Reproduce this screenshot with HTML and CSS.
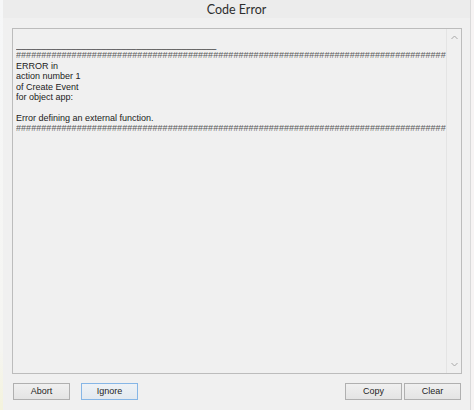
FILE: index.html
```html
<!DOCTYPE html>
<html>
<head>
<meta charset="utf-8">
<title>Code Error</title>
<link rel="stylesheet" href="styles.css">
</head>
<body>
<div class="window">
  <div class="frame-left"></div>
  <div class="main">
    <div class="titlebar">Code Error</div>
    <div class="content">
      <div class="box">
        <div class="text">
          <div class="line">________________________________________</div>
          <div class="line hash">#####################################################################################</div>
          <div class="line">ERROR in</div>
          <div class="line">action number 1</div>
          <div class="line">of Create Event</div>
          <div class="line">for object app:</div>
          <div class="line">&nbsp;</div>
          <div class="line">Error defining an external function.</div>
          <div class="line hash">#####################################################################################</div>
        </div>
        <div class="scrollbar">
          <div class="sb-btn">
            <svg width="7" height="5" viewBox="0 0 7 5"><path d="M0.5 4 L3.5 1 L6.5 4" fill="none" stroke="#a8a8a8" stroke-width="1"/></svg>
          </div>
          <div class="sb-track"></div>
          <div class="sb-btn">
            <svg width="7" height="5" viewBox="0 0 7 5"><path d="M0.5 1 L3.5 4 L6.5 1" fill="none" stroke="#a8a8a8" stroke-width="1"/></svg>
          </div>
        </div>
      </div>
      <div class="buttons">
        <button class="btn">Abort</button>
        <button class="btn default">Ignore</button>
        <div class="spacer"></div>
        <button class="btn">Copy</button>
        <button class="btn">Clear</button>
      </div>
    </div>
  </div>
  <div class="frame-right"></div>
</div>
</body>
</html>
```
FILE: styles.css
```css
html, body {
  margin: 0;
  padding: 0;
}
body {
  width: 474px;
  height: 410px;
  overflow: hidden;
  background: #f0f0f0;
  font-family: "Liberation Sans", Arial, sans-serif;
}
.window {
  display: flex;
  width: 474px;
  height: 410px;
}
.frame-left {
  width: 3px;
  flex: none;
  background: linear-gradient(#f6f7f8, #f5f5f2 85%, #f4f3dc);
}
.frame-right {
  width: 3px;
  flex: none;
  background: #f7f4f4;
}
.main {
  flex: 1;
  min-width: 0;
  display: flex;
  flex-direction: column;
  border-right: 1px solid #dadada;
  background: #f0f0f0;
}
.titlebar {
  height: 18px;
  line-height: 20px;
  text-align: center;
  font-family: Lato, "Liberation Sans", sans-serif;
  font-size: 12.5px;
  color: #2e2e2e;
  background: #ececec;
}
.content {
  flex: 1;
  min-width: 0;
  display: flex;
  flex-direction: column;
  padding: 10px 8px 0 9px;
}
.box {
  height: 344px;
  min-width: 0;
  display: flex;
  border: 1px solid #bcbcbc;
  background: #f0f0f0;
}
.text {
  flex: 1;
  min-width: 0;
  overflow: hidden;
  padding: 11px 0 0 3px;
  font-size: 9px;
  line-height: 10.4px;
  color: #222;
}
.line {
  white-space: pre;
  overflow: hidden;
}
.hash {
  color: #5a5a5a;
  letter-spacing: 0.05px;
}
.scrollbar {
  width: 14px;
  flex: none;
  border-left: 1px solid #e4e4e4;
  display: flex;
  flex-direction: column;
}
.sb-btn {
  height: 17px;
  display: flex;
  align-items: center;
  justify-content: center;
}
.sb-track {
  flex: 1;
}
.buttons {
  display: flex;
  margin-top: 9px;
  padding: 0 1px;
}
.spacer {
  flex: 1;
}
.btn {
  height: 17px;
  width: 57px;
  flex: none;
  margin: 0;
  padding: 0;
  border: 1px solid #b0b0b0;
  background: linear-gradient(#f0f0f0, #e4e4e4);
  font-family: "Liberation Sans", Arial, sans-serif;
  font-size: 9px;
  color: #1e1e1e;
  line-height: 15px;
}
.btn + .btn {
  margin-left: 2px;
}
.btn.default {
  margin-left: 11px;
  border-color: #86b6e6;
  background: linear-gradient(#eef2f6, #e3e9ef);
}
```
